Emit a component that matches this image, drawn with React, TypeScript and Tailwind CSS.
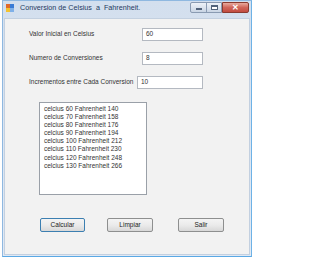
import React from 'react'

const font = { fontFamily: '"Liberation Sans", Arial, sans-serif' }

const rows = [
  { label: 'Valor Inicial en Celsius', value: '60', labelW: 'w-[113px]', inputW: 'w-[61px]' },
  { label: 'Numero de Conversiones', value: '8', labelW: 'w-[113px]', inputW: 'w-[61px]' },
  { label: 'Incrementos entre Cada Conversion', value: '10', labelW: 'w-[108px]', inputW: 'w-[66px]' },
]

const results = [60, 70, 80, 90, 100, 110, 120, 130].map((c) => ({
  c,
  f: Math.round((c * 9) / 5 + 32),
}))

function AppIcon() {
  return (
    <svg width="8" height="8" viewBox="0 0 8 8" className="shrink-0">
      <rect x="0" y="0" width="4" height="4" fill="#e06a2c" />
      <rect x="4" y="0" width="4" height="4" fill="#3a7bd5" />
      <rect x="0" y="4" width="4" height="4" fill="#f2c230" />
      <rect x="4" y="4" width="4" height="4" fill="#7fb0e8" />
    </svg>
  )
}

function WinButton({ label, focused }: { label: string; focused?: boolean }) {
  return (
    <button
      className={`h-[14px] rounded-[2px] border bg-gradient-to-b from-[#f4f4f4] via-[#ebebeb] to-[#d8d8d8] text-[6.5px] leading-none text-[#222] ${
        focused ? 'border-[#3c7fb1]' : 'border-[#8e8f8f]'
      }`}
      style={font}
    >
      {label}
    </button>
  )
}

export default function App() {
  return (
    <div className="w-[320px] h-[259px] bg-white overflow-hidden" style={font}>
      <div className="ml-[2px] w-[250px] h-[257px] flex flex-col border border-[#8fb8e0] border-b-[#5aa8e4] border-r-[#6eb2e6] bg-gradient-to-b from-[#d3dfee] to-[#e1e9f4] px-[1px] pb-[1px]">
        {/* Title bar */}
        <div className="h-[17px] flex items-start shrink-0">
          <div className="flex items-center gap-[6px] pl-[2px] pt-[3px]">
            <AppIcon />
            <span className="text-[7.2px] leading-none text-[#1e3a5f] whitespace-pre">
              Conversion de Celsius  a  Fahrenheit.
            </span>
          </div>
          <div className="ml-auto flex pt-[1px] pr-[1px]">
            <div className="flex h-[11px] rounded-l-[2px] border border-[#8a9bb2] bg-gradient-to-b from-[#eef2f8] to-[#c9d5e4]">
              <div className="w-[16px] flex items-center justify-center border-r border-[#8a9bb2]">
                <div className="w-[6px] h-[2px] mt-[3px] bg-white border border-[#51627a]" />
              </div>
              <div className="w-[14px] flex items-center justify-center">
                <div className="w-[7px] h-[5px] bg-white border border-[#51627a] border-t-2" />
              </div>
            </div>
            <div className="w-[27px] h-[11px] rounded-r-[2px] border border-[#8a3a30] bg-gradient-to-b from-[#e7aa9e] via-[#d0655a] to-[#c24b3f] flex items-center justify-center text-white text-[8px] font-bold leading-none">
              ✕
            </div>
          </div>
        </div>

        {/* Client area */}
        <div className="flex-1 bg-[#f2f2f2] border border-[#c3d0e0] flex flex-col pt-[9px]">
          <div className="flex flex-col gap-[11px] pl-[24px]">
            {rows.map((r) => (
              <div key={r.label} className="flex items-center h-[13px]">
                <span className={`${r.labelW} text-[6.5px] leading-none text-[#333]`}>{r.label}</span>
                <div
                  className={`${r.inputW} h-[13px] bg-white border border-[#b4b9c1] flex items-center pl-[3px] text-[6.5px] leading-none text-[#333]`}
                >
                  {r.value}
                </div>
              </div>
            ))}
          </div>

          <div className="ml-[34px] mt-[13px] w-[108px] h-[93px] bg-white border border-[#9aa0a8] pl-[4px] pt-[2px]">
            {results.map((r) => (
              <div key={r.c} className="text-[6.5px] leading-[8.1px] text-[#333]">
                celcius {r.c} Fahrenheit {r.f}
              </div>
            ))}
          </div>

          <div className="flex ml-[35px] mt-[23px]">
            <div className="w-[45px] flex flex-col"><WinButton label="Calcular" focused /></div>
            <div className="w-[46px] ml-[22px] flex flex-col"><WinButton label="Limpiar" /></div>
            <div className="w-[46px] ml-[25px] flex flex-col"><WinButton label="Salir" /></div>
          </div>
        </div>
      </div>
    </div>
  )
}
